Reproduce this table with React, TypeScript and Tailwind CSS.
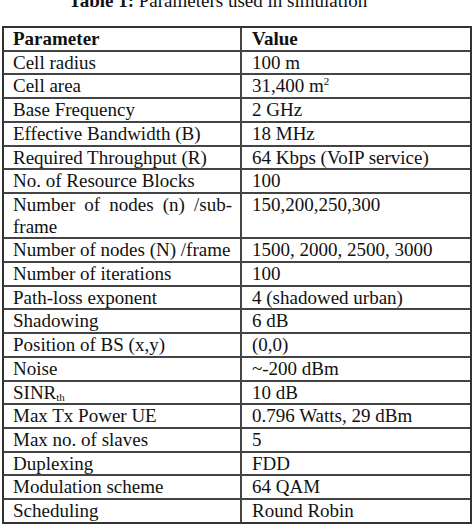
const ROWS: { param: React.ReactNode; value: React.ReactNode }[] = [
  { param: 'Cell radius', value: '100 m' },
  {
    param: 'Cell area',
    value: (
      <>
        31,400 m<sup className="text-[11px] -top-[0.7em]">2</sup>
      </>
    ),
  },
  { param: 'Base Frequency', value: '2 GHz' },
  { param: 'Effective Bandwidth (B)', value: '18 MHz' },
  { param: 'Required Throughput (R)', value: '64 Kbps (VoIP service)' },
  { param: 'No. of Resource Blocks', value: '100' },
  { param: 'Number of nodes (n) /sub-frame', value: '150,200,250,300' },
  { param: 'Number of nodes (N) /frame', value: '1500, 2000, 2500, 3000' },
  { param: 'Number of iterations', value: '100' },
  { param: 'Path-loss exponent', value: '4 (shadowed urban)' },
  { param: 'Shadowing', value: '6 dB' },
  { param: 'Position of BS (x,y)', value: '(0,0)' },
  { param: 'Noise', value: '~-200 dBm' },
  {
    param: (
      <>
        SINR<sub className="text-[11px]">th</sub>
      </>
    ),
    value: '10 dB',
  },
  { param: 'Max Tx Power UE', value: '0.796 Watts, 29 dBm' },
  { param: 'Max no. of slaves', value: '5' },
  { param: 'Duplexing', value: 'FDD' },
  { param: 'Modulation scheme', value: '64 QAM' },
  { param: 'Scheduling', value: 'Round Robin' },
];

export default function App() {
  return (
    <div
      className="w-[474px] h-[526px] overflow-hidden bg-white text-[#111] text-[19px]"
      style={{ fontFamily: '"Liberation Serif", "Times New Roman", serif' }}
    >
      {/* caption, cut off by the top edge */}
      <div className="w-[436px] -mt-[8px] text-center leading-[18px]">
        <span className="font-bold">Table 1:</span> Parameters used in simulation
      </div>

      <div className="mt-[16px] ml-[2px] w-[470px] border-2 border-[#333]">
        <div className="grid grid-cols-[238px_1fr] border-b-2 border-[#444] leading-[21.7px] font-bold">
          <div className="pl-[9px] pr-[8px] border-r-2 border-[#444]">Parameter</div>
          <div className="pl-[10px]">Value</div>
        </div>
        {ROWS.map((r, i) => (
          <div
            key={i}
            className={
              'grid grid-cols-[238px_1fr] leading-[21.7px] ' +
              (i < ROWS.length - 1 ? 'border-b-2 border-[#444]' : '')
            }
          >
            <div className="pl-[9px] pr-[8px] border-r-2 border-[#444] text-justify">{r.param}</div>
            <div className="pl-[10px]">{r.value}</div>
          </div>
        ))}
      </div>
    </div>
  );
}
